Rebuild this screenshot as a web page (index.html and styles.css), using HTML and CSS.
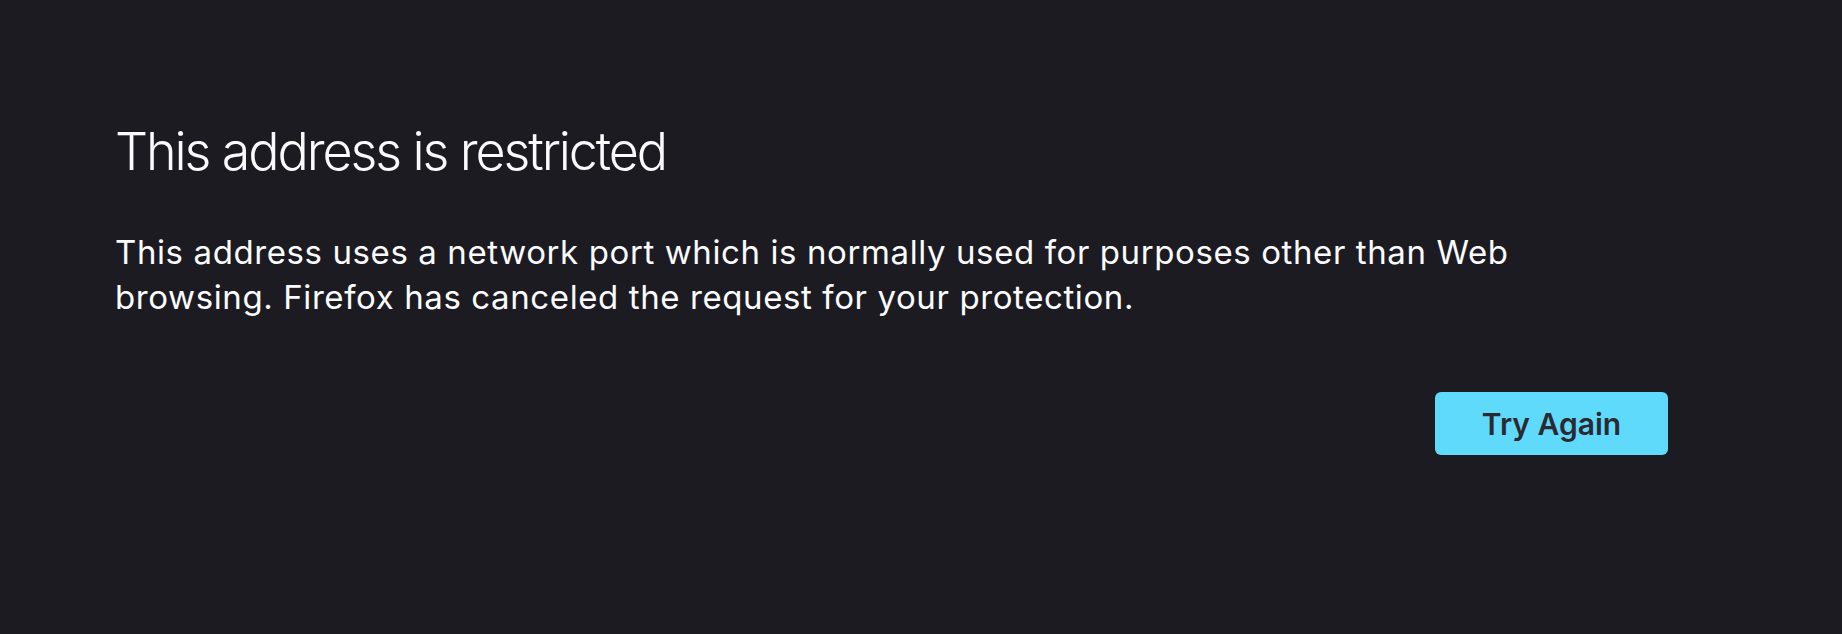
FILE: index.html
```html
<!DOCTYPE html>
<html lang="en">
<head>
  <meta charset="UTF-8" />
  <meta name="viewport" content="width=device-width, initial-scale=1.0" />
  <title>Problem loading page</title>
  <link rel="stylesheet" href="styles.css">
</head>
<body>

  <div class="container">
    <h1 class="title">This address is restricted</h1>
    <p class="desc">This address uses a network port which is normally used for purposes other than Web browsing. Firefox has canceled the request for your protection.</p>
    <div class="button-container">
      <button class="try-again">Try Again</button>
    </div>
  </div>

</body>
</html>
```

FILE: styles.css
```css
html, body {
  height: 100%;
}

body {
  margin: 0;
  background-color: #1c1b22;
  color: #fbfbfe;
  font-family: Inter, 'Noto Sans', sans-serif;
}

.container {
  width: 1553px;
  padding: 121px 0 0 115px;
  display: flex;
  flex-direction: column;
}

.title {
  margin: 0;
  font-size: 52px;
  line-height: 62px;
  font-weight: 300;
  letter-spacing: -2.1px;
}

.desc {
  margin: 47px 0 0 0;
  font-size: 33px;
  line-height: 45px;
  font-weight: 400;
  letter-spacing: 0.6px;
}

.button-container {
  display: flex;
  justify-content: flex-end;
  margin-top: 72px;
}

.try-again {
  width: 233px;
  height: 63px;
  border: none;
  border-radius: 6px;
  background-color: #60dafb;
  color: #2b2a33;
  font-family: inherit;
  font-size: 30px;
  font-weight: 600;
  cursor: pointer;
}
```
